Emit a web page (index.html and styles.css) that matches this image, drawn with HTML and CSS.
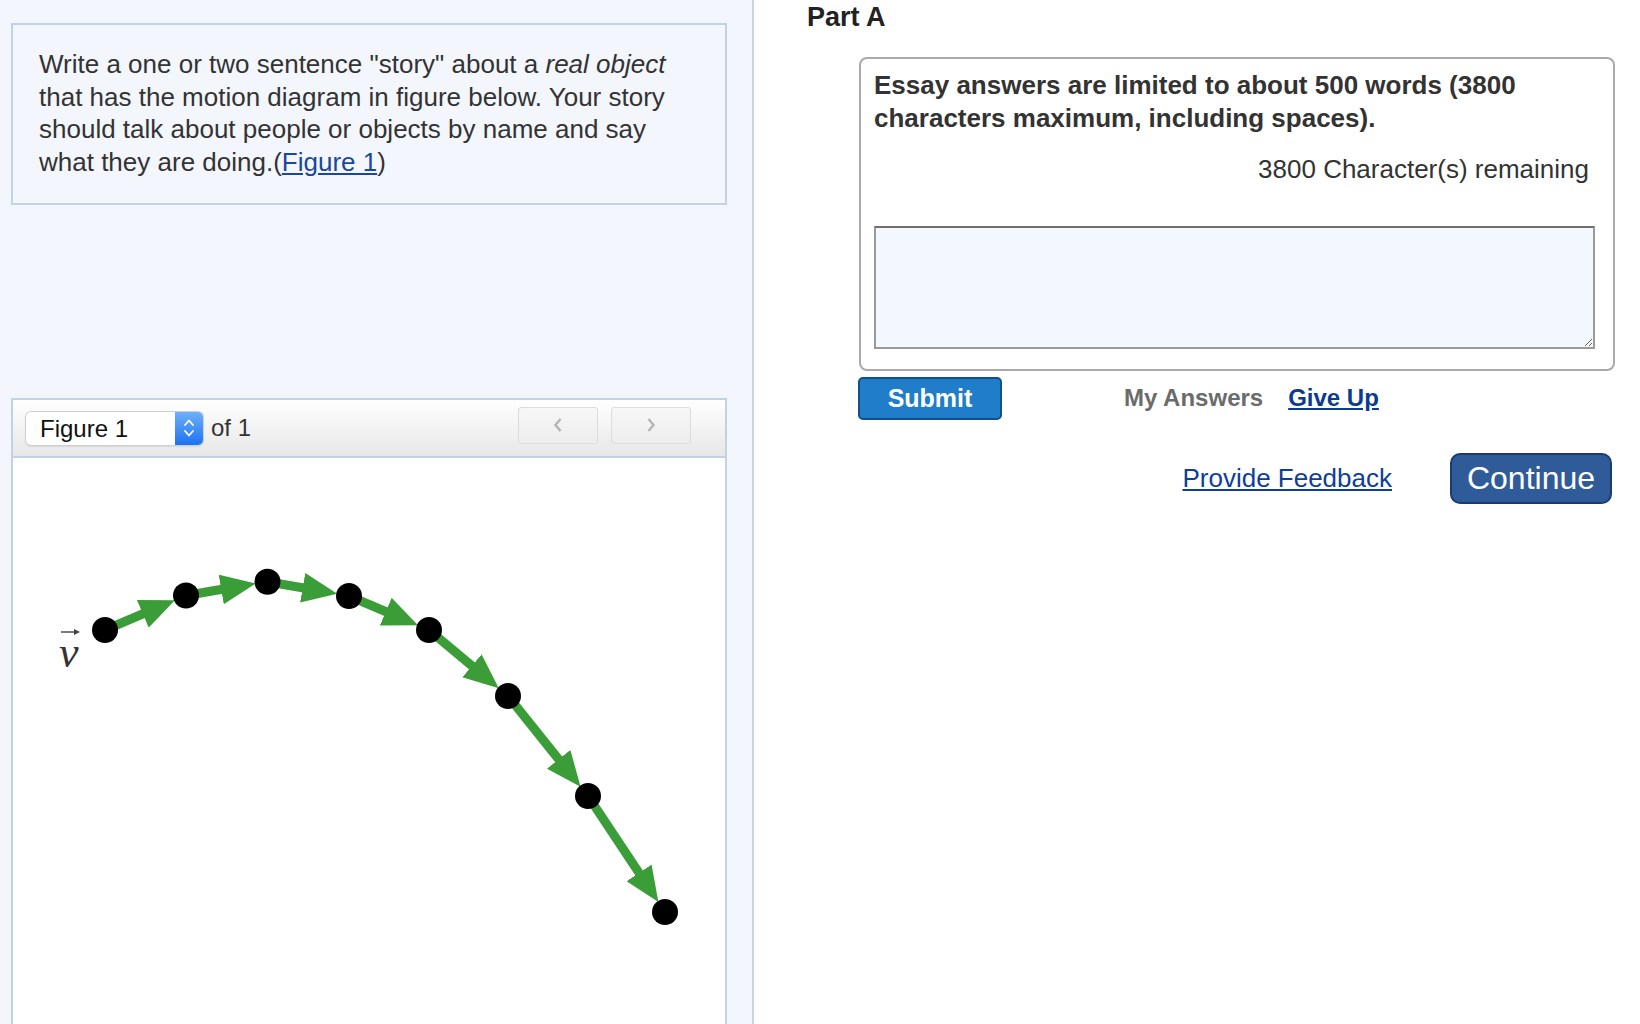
FILE: index.html
```html
<!DOCTYPE html>
<html lang="en">
<head>
<meta charset="utf-8">
<title>Part A</title>
<link rel="stylesheet" href="styles.css">
</head>
<body>
<div class="page">
  <aside class="left">
    <div class="prompt">
      <p>Write a one or two sentence "story" about a <em>real object</em> that has the motion diagram in figure below. Your story should talk about people or objects by name and say what they are doing.(<a href="#">Figure 1</a>)</p>
    </div>
    <div class="figure">
      <div class="fig-head">
        <div class="select">
          <span class="sel-text">Figure 1</span>
          <span class="sel-btn">
            <svg width="14" height="24" viewBox="0 0 14 24"><path d="M3 9 L7 4.5 L11 9 M3 15 L7 19.5 L11 15" fill="none" stroke="#fff" stroke-width="1.8" stroke-linecap="round" stroke-linejoin="round"/></svg>
          </span>
        </div>
        <span class="of">of 1</span>
        <div class="navs">
          <button class="nav" type="button"><svg width="10" height="16" viewBox="0 0 10 16"><path d="M7.5 2 L2.5 8 L7.5 14" fill="none" stroke="#b4b4b4" stroke-width="2.4"/></svg></button>
          <button class="nav" type="button"><svg width="10" height="16" viewBox="0 0 10 16"><path d="M2.5 2 L7.5 8 L2.5 14" fill="none" stroke="#b4b4b4" stroke-width="2.4"/></svg></button>
        </div>
      </div>
      <div class="fig-body">
        <svg class="diagram" width="712" height="600" viewBox="0 0 712 600">
          <defs>
            <marker id="ah" markerUnits="userSpaceOnUse" markerWidth="36" markerHeight="30" viewBox="0 0 36 30" refX="1" refY="15" orient="auto">
              <path d="M0 0 L35 15 L0 30 Z" fill="#3b9d37"/>
            </marker>
          </defs>
          <g stroke="#3b9d37" stroke-width="9" fill="none" marker-end="url(#ah)">
            <line x1="92" y1="172" x2="130.7" y2="155.5"/>
            <line x1="173" y1="137.5" x2="209.2" y2="131.3"/>
            <line x1="254.5" y1="123.7" x2="290.7" y2="130"/>
            <line x1="336" y1="138" x2="373.7" y2="154"/>
            <line x1="416" y1="172" x2="459.7" y2="208.5"/>
            <line x1="495" y1="238" x2="546.3" y2="302.1"/>
            <line x1="575" y1="338" x2="626.6" y2="415.7"/>
          </g>
          <g fill="#000">
            <circle cx="92" cy="172" r="13"/>
            <circle cx="173" cy="137.5" r="13"/>
            <circle cx="254.5" cy="123.7" r="13"/>
            <circle cx="336" cy="138" r="13"/>
            <circle cx="416" cy="172" r="13"/>
            <circle cx="495" cy="238" r="13"/>
            <circle cx="575" cy="338" r="13"/>
            <circle cx="652" cy="454" r="13"/>
          </g>
          <line x1="48" y1="174" x2="64" y2="174" stroke="#444" stroke-width="1.4"/>
          <path d="M61 171 L67 174 L61 177 Z" fill="#444"/>
          <text x="46" y="209" class="vlabel">v</text>
        </svg>
      </div>
    </div>
  </aside>
  <main class="right">
    <h2 class="part">Part A</h2>
    <div class="essay">
      <p class="limit">Essay answers are limited to about 500 words (3800 characters maximum, including spaces).</p>
      <p class="count">3800 Character(s) remaining</p>
      <textarea class="answer" aria-label="Answer"></textarea>
    </div>
    <div class="actions">
      <button class="submit" type="button">Submit</button>
      <span class="my">My Answers</span>
      <a class="giveup" href="#">Give Up</a>
    </div>
    <div class="footer">
      <a class="feedback" href="#">Provide Feedback</a>
      <button class="continue" type="button">Continue</button>
    </div>
  </main>
</div>
</body>
</html>
```

FILE: styles.css
```css
html, body {
  margin: 0;
  padding: 0;
}
body {
  font-family: "Liberation Sans", Arial, sans-serif;
  color: #333;
  background: #fff;
}
.page {
  display: flex;
  height: 1024px;
  overflow: hidden;
}

/* left column */
.left {
  width: 754px;
  flex: none;
  box-sizing: border-box;
  background: #f3f7fd;
  border-right: 2px solid #c5d4e6;
  padding: 23px 0 0 11px;
}
.prompt {
  width: 716px;
  box-sizing: border-box;
  border: 2px solid #c3d1e2;
  padding: 23px 36px 25px 26px;
}
.prompt p {
  margin: 0;
  font-size: 26px;
  line-height: 32.5px;
  color: #333;
}
.prompt a {
  color: #1a47a0;
}
.figure {
  width: 716px;
  height: 700px;
  box-sizing: border-box;
  margin-top: 193px;
  border: 2px solid #c3d1e2;
  border-bottom: none;
  background: #fff;
}
.fig-head {
  display: flex;
  align-items: center;
  height: 56px;
  padding: 0 34px 0 13px;
  background: linear-gradient(#ffffff, #e7e7e7);
  border-bottom: 2px solid #c3d1e2;
}
.select {
  display: flex;
  width: 177px;
  height: 33px;
  border-radius: 5px;
  background: #fff;
  box-shadow: 0 0 0 1px #d0d0d0, 0 1px 2px rgba(0, 0, 0, 0.25);
  overflow: hidden;
}
.sel-text {
  flex: 1;
  padding-left: 14px;
  font-size: 24px;
  line-height: 33px;
  color: #111;
}
.sel-btn {
  width: 28px;
  display: flex;
  align-items: center;
  justify-content: center;
  background: linear-gradient(#6fb0fb, #1c72f2);
}
.of {
  margin-left: 8px;
  font-size: 24px;
  color: #333;
}
.navs {
  margin-left: auto;
  margin-bottom: 6px;
  display: flex;
  gap: 13px;
}
.nav {
  width: 80px;
  height: 37px;
  padding: 0;
  display: flex;
  align-items: center;
  justify-content: center;
  border: 1px solid #dddddd;
  border-radius: 3px;
  background: linear-gradient(#f7f7f7, #ededed);
}
.fig-body {
  background: #fff;
}
.diagram {
  display: block;
}
.vlabel {
  font-family: "Liberation Serif", "Times New Roman", serif;
  font-style: italic;
  font-size: 44px;
  fill: #333;
}

/* right column */
.right {
  flex: 1;
  padding-left: 53px;
}
.part {
  margin: 0;
  padding-top: 2px;
  font-size: 27px;
  line-height: 30px;
  font-weight: bold;
  color: #222;
}
.essay {
  width: 756px;
  box-sizing: border-box;
  margin: 25px 0 0 52px;
  border: 2px solid #aaaaaa;
  border-radius: 8px;
  padding: 10px 18px 20px 13px;
}
.limit {
  margin: 0;
  font-size: 26px;
  line-height: 32.5px;
  font-weight: bold;
  color: #333;
}
.count {
  margin: 19px 6px 0 0;
  text-align: right;
  font-size: 26px;
  line-height: 32.5px;
  color: #333;
}
.answer {
  display: block;
  width: 100%;
  height: 123px;
  box-sizing: border-box;
  margin-top: 40px;
  border: 2px solid;
  border-color: #6f6f6f #9a9a9a #9a9a9a #9a9a9a;
  background: #f3f8fe;
  font-family: "Liberation Sans", Arial, sans-serif;
  font-size: 20px;
}
.actions {
  display: flex;
  align-items: center;
  margin: 6px 0 0 51px;
}
.submit {
  width: 144px;
  height: 43px;
  box-sizing: border-box;
  padding: 0;
  background: #1f7dca;
  border: 2px solid #12508b;
  border-radius: 5px;
  color: #fff;
  font-family: "Liberation Sans", Arial, sans-serif;
  font-weight: bold;
  font-size: 25px;
}
.my {
  margin-left: 122px;
  font-weight: bold;
  font-size: 24px;
  color: #6b6b6b;
}
.giveup {
  margin-left: 25px;
  font-weight: bold;
  font-size: 24px;
  color: #0b3b8f;
  text-decoration: underline;
}
.footer {
  display: flex;
  align-items: center;
  justify-content: flex-end;
  width: 756px;
  box-sizing: border-box;
  margin: 33px 0 0 52px;
  padding-right: 3px;
}
.feedback {
  margin-right: 58px;
  font-size: 26px;
  color: #0e3e98;
  text-decoration: underline;
}
.continue {
  width: 162px;
  height: 51px;
  box-sizing: border-box;
  padding: 0;
  background: #2f5c99;
  border: 2px solid #1b3c70;
  border-radius: 10px;
  color: #fff;
  font-family: "Liberation Sans", Arial, sans-serif;
  font-size: 32px;
}
```
